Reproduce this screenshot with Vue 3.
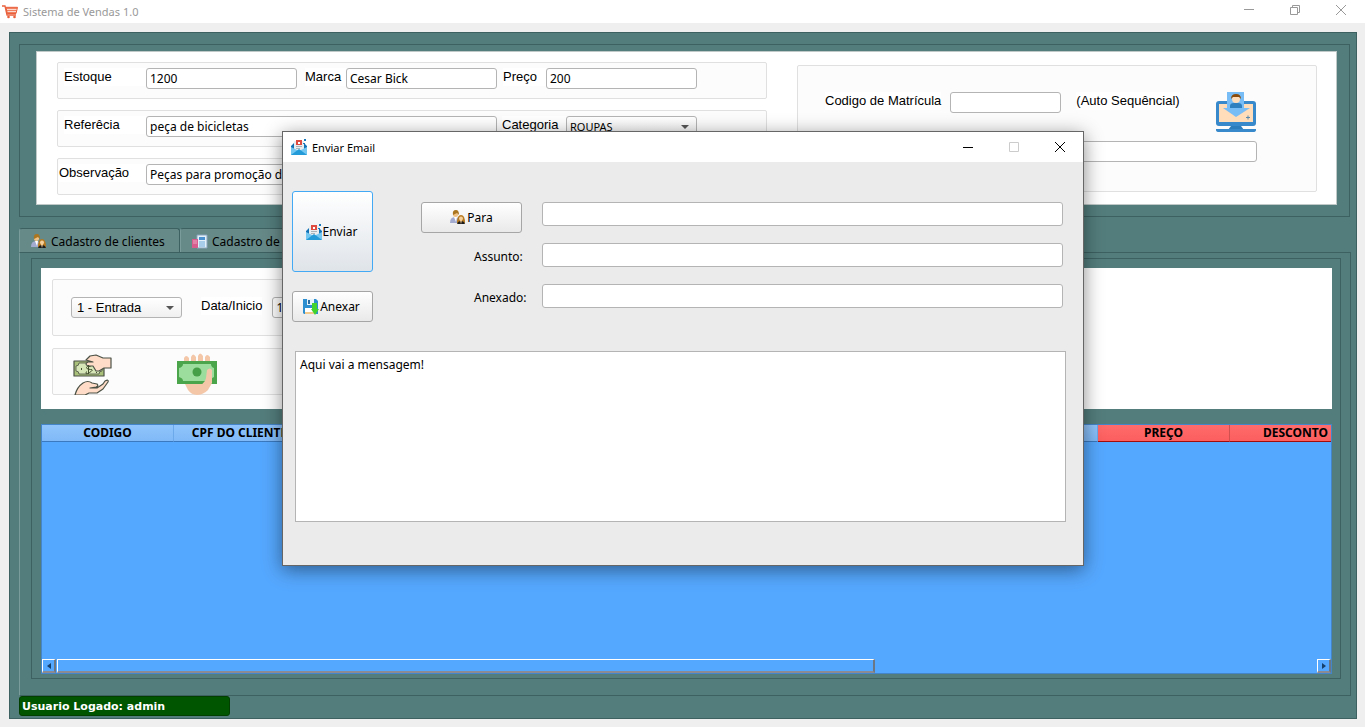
<template>
    <div class="desktop">
        <header class="titlebar">
            <svg class="cart" viewBox="0 0 16 14" aria-hidden="true">
                <path d="M0 1h3l2 9h9" fill="none" stroke="#e9603c" stroke-width="1.3" />
                <path d="M4 2.3h11.5L14 8.5H5.200z" fill="#f0805f" stroke="#e9603c" />
                <path d="M5 4.500h9.500M5.500 6.500h8.500" stroke="#fff" stroke-width=".7" />
                <circle cx="6.500" cy="12" r="1.300" fill="#e9603c" />
                <circle cx="12.500" cy="12" r="1.300" fill="#e9603c" />
            </svg>
            <h1>Sistema de Vendas 1.0</h1>
            <div class="win-buttons muted">
                <button aria-label="Minimizar"><svg viewBox="0 0 12 12"><path d="M1 5.500h10" /></svg></button>
                <button aria-label="Restaurar"><svg viewBox="0 0 12 12"><path d="M1.500 3.500h7v7h-7zM3.500 3.500v-2h7v7h-2" /></svg></button>
                <button aria-label="Fechar"><svg viewBox="0 0 12 12"><path d="M1 1l10 10M11 1L1 11" /></svg></button>
            </div>
        </header>

        <main class="workspace">
            <section class="frame top-frame">
                <div class="card product-card">
                    <div class="product-rows">
                        <div class="group">
                            <label class="first" for="estoque">Estoque</label>
                            <input id="estoque" class="short" v-model="produto.estoque">
                            <label class="second" for="marca">Marca</label>
                            <input id="marca" class="short" v-model="produto.marca">
                            <label class="third" for="preco">Preço</label>
                            <input id="preco" class="short" v-model="produto.preco">
                        </div>
                        <div class="group">
                            <label class="first" for="referencia">Referêcia</label>
                            <input id="referencia" class="long" v-model="produto.referencia">
                            <label class="category" for="categoria">Categoria</label>
                            <span class="combo small">
                                <select id="categoria" v-model="produto.categoria">
                                    <option>ROUPAS</option>
                                </select>
                            </span>
                        </div>
                        <div class="group">
                            <label class="first wide" for="observacao">Observação</label>
                            <input id="observacao" class="long" v-model="produto.observacao">
                        </div>
                    </div>

                    <div class="group enrollment">
                        <div class="enrollment-row">
                            <label for="matricula">Codigo de Matrícula</label>
                            <input id="matricula" class="code" v-model="matricula">
                            <span class="hint">(Auto Sequêncial)</span>
                            <svg class="monitor" viewBox="0 0 42 41" aria-hidden="true">
                                <rect x="1" y="9" width="40" height="25" rx="3" fill="#3789cb" />
                                <path d="M4 12h34v18H4z" fill="#ffdcba" />
                                <path d="M16 34h10l3 4H13z" fill="#2d7cbc" />
                                <path d="M1 37h40v1q0 2-3 2H4q-3 0-3-2z" fill="#3789cb" />
                                <path d="M12 0h17v16h6L21 25 8 16h4z" fill="#78bdf6" />
                                <path d="M15 16v-2q0-3 4-3h4q4 0 4 3v2z" fill="#2f80bf" />
                                <circle cx="21" cy="7" r="4" fill="#ffdcba" />
                                <path d="M16 7q0-5 5-5t5 5l-2-2h-6z" fill="#8a4b0b" />
                                <path d="M31 25.500h4M33 23.500v4" stroke="#5a88ab" />
                            </svg>
                        </div>
                        <input class="enrollment-name" aria-label="Nome" v-model="nome">
                    </div>
                </div>
            </section>

            <nav class="tabs">
                <button class="tab"><svg class="icon"><use href="#people" /></svg>Cadastro de clientes</button>
                <button class="tab">
                    <svg class="icon" viewBox="0 0 16 16" aria-hidden="true">
                        <path d="M5 1h10v13H5z" fill="#e4f0f9" stroke="#87a4bd" />
                        <path d="M7 3h6v3H7z" fill="#4b91cf" />
                        <path d="M7 8h6M7 10h6M7 12h6" stroke="#6caadd" />
                        <path d="M0 5h6v9H0z" fill="#d65c8e" />
                        <path d="M1 7h4M1 9h4" stroke="#f0a4c1" />
                    </svg>Cadastro de
                </button>
            </nav>

            <section class="tab-page">
                <div class="frame list-frame">
                    <div class="card filter-card">
                        <div class="group filters">
                            <span class="combo kind">
                                <select aria-label="Tipo" v-model="tipo">
                                    <option>1 - Entrada</option>
                                </select>
                            </span>
                            <label for="inicio">Data/Inicio</label>
                            <input id="inicio" class="date" v-model="inicio">
                        </div>
                        <div class="group actions">
                            <button class="action" aria-label="Pagamento">
                                <svg viewBox="0 0 42 42">
                                    <g stroke="#4b5145" stroke-width="1.200" stroke-linejoin="round">
                                        <path d="M2 8h30v15H2z" fill="#a9c07a" />
                                        <path d="M7 10h20q0 3 3 3v5q-3 0-3 3H7q0-3-3-3v-5q3 0 3-3z" fill="#d6e6b6" stroke-width=".8" />
                                        <path d="M14 7l4-4 6-1 7 3h8v10h-7l-5 3h-3l-3-5h-5q-4-2 0-4l5 0z" fill="#ffdcc8" />
                                        <path d="M3 42q2-8 8-12 5-3 9 0l5 1q2 2-1 3l-6 1h7l6-4 2-3q4-2 3 1l-5 7-6 4h-8l-4 2z" fill="#ffdcc8" />
                                    </g>
                                    <path d="M18.500 13.500q-4-1-4 1t4 2-1 3-3-1M16.500 12v9" fill="none" stroke="#44502f" />
                                    <path d="M9.500 15v2M24.500 19v1" stroke="#44502f" />
                                </svg>
                            </button>
                            <button class="action" aria-label="Dinheiro">
                                <svg viewBox="0 0 42 42">
                                    <path d="M8 9V5q2-4 5 0v4zM15 9V4q2-5 5 0v5zM22 9V3q2-5 5 0v6zM29 9V4q2-4 5 0v5z" fill="#f4c7a9" />
                                    <path d="M8 29h27q-1 9-9 12-9 3-14-4z" fill="#f4c7a9" />
                                    <path d="M1 8h40v23H1z" fill="#4ba64b" />
                                    <path d="M7 11h28q0 3 3 4v9q-3 1-3 4H7q0-3-4-4v-9q4-1 4-4z" fill="#9cdc9d" />
                                    <circle cx="21" cy="19" r="4.500" fill="#459f46" />
                                    <path d="M18 34q11-2 12-9l1-8q3-3 5 0v13q-3 6-7 7z" fill="#f4c7a9" />
                                </svg>
                            </button>
                        </div>
                    </div>

                    <div class="grid-box">
                        <table>
                            <thead>
                                <tr>
                                    <th v-for="(coluna, i) in colunas" :key="i" :class="{ price: i > 7 }">{{ coluna }}</th>
                                </tr>
                            </thead>
                        </table>
                        <div class="scrollbar">
                            <button aria-label="Rolar para a esquerda"><svg viewBox="0 0 6 6"><path d="M5 0v6L1 3z" /></svg></button>
                            <div class="track"><div class="thumb"></div></div>
                            <button aria-label="Rolar para a direita"><svg viewBox="0 0 6 6"><path d="M1 0v6l4-3z" /></svg></button>
                        </div>
                    </div>
                </div>
            </section>

            <footer class="status">Usuario Logado: admin</footer>
        </main>

        <div class="overlay">
            <form class="dialog" role="dialog" aria-labelledby="dialog-title" @submit.prevent>
                <header class="dialog-bar">
                    <svg class="icon"><use href="#mail" /></svg>
                    <h2 id="dialog-title">Enviar Email</h2>
                    <div class="win-buttons">
                        <button type="button" aria-label="Minimizar"><svg viewBox="0 0 12 12"><path d="M1 6.500h10" /></svg></button>
                        <button type="button" aria-label="Maximizar" disabled><svg viewBox="0 0 12 12"><path d="M1.500 1.500h9v9h-9z" /></svg></button>
                        <button type="button" aria-label="Fechar"><svg viewBox="0 0 12 12"><path d="M1 1l10 10M11 1L1 11" /></svg></button>
                    </div>
                </header>
                <div class="dialog-body">
                    <div class="dialog-top">
                        <div class="side">
                            <button class="btn send"><svg class="icon"><use href="#mail" /></svg>Enviar</button>
                            <button type="button" class="btn">
                                <svg class="icon" viewBox="0 0 16 16" aria-hidden="true">
                                    <path d="M0 0h13l2 2v13H1l-1-1z" fill="#2d8fd0" />
                                    <path d="M4 0h7v6H4z" fill="#e8f3fa" />
                                    <path d="M5 1h2v4H5z" fill="#2a6da2" />
                                    <path d="M2 9h11v6H2z" fill="#fff" />
                                    <path d="M2 13h11v2H2z" fill="#f1c98d" />
                                    <path d="M9 4h5v6h2l-4 6-4-6h1z" fill="#43d32f" />
                                </svg>Anexar
                            </button>
                        </div>
                        <div class="fields">
                            <button type="button" class="btn">
                                <svg class="icon"><use href="#people" /></svg>Para
                            </button>
                            <input aria-label="Para" v-model="email.para">
                            <label for="assunto">Assunto:</label>
                            <input id="assunto" v-model="email.assunto">
                            <label for="anexado">Anexado:</label>
                            <input id="anexado" v-model="email.anexado">
                        </div>
                    </div>
                    <textarea aria-label="Mensagem" v-model="email.mensagem"></textarea>
                </div>
            </form>
        </div>

        <svg class="sprite" aria-hidden="true">
            <symbol id="mail" viewBox="0 0 16 16">
                <path d="M0 7l3-3v7H0zM16 7l-3-3v7h3z" fill="#1272b5" />
                <path d="M3 2h10v10H3z" fill="#e9edf0" />
                <path d="M5 1h6v5H5z" fill="#df4b3e" />
                <path d="M7 3h2v2H7z" fill="#fff" />
                <path d="M5 7.500h6M5 9.500h4" stroke="#a9b3ba" />
                <path d="M0 8l8 4 8-4v8H0z" fill="#74c7f0" />
                <path d="M0 16l8-6 8 6z" fill="#239bd9" />
                <path d="M13 0h2v2h-2zM12 4h2v1h-2z" fill="#1878ba" />
            </symbol>
            <symbol id="people" viewBox="0 0 16 16">
                <path d="M0 13q0-6 5-6t5 6z" fill="#a3acd0" />
                <path d="M4 7h3l-1 5z" fill="#fff" />
                <circle cx="5.500" cy="4.500" r="2.500" fill="#f0c285" />
                <path d="M3 5q-1-5 3-5 3 0 3 5L7 3z" fill="#ab7620" />
                <path d="M7 13q0-8 4-8t4 8z" fill="#b7791f" />
                <path d="M7 14q1-3 4-3t4 3z" fill="#1c1c1c" />
                <circle cx="11" cy="8.500" r="2" fill="#f6d09a" />
                <path d="M10 10h2l-1 4z" fill="#f6d09a" />
            </symbol>
        </svg>
    </div>
</template>

<script setup>
import { ref } from 'vue'

const produto = ref({
    estoque: '1200',
    marca: 'Cesar Bick',
    preco: '200',
    referencia: 'peça de bicicletas',
    categoria: 'ROUPAS',
    observacao: 'Peças para promoção d'
})

const matricula = ref('')
const nome = ref('')
const tipo = ref('1 - Entrada')
const inicio = ref('12')

// as duas últimas colunas têm cabeçalho vermelho
const colunas = ['CODIGO', 'CPF DO CLIENTE', '', '', '', '', '', '', 'PREÇO', 'DESCONTO']

const email = ref({
    para: '',
    assunto: '',
    anexado: '',
    mensagem: 'Aqui vai a mensagem!'
})
</script>

<style>
body {
    margin: 0;
    background-color: #efefef;
}
</style>

<style scoped>
* {
    box-sizing: border-box;
}

.desktop {
    min-height: 100vh;
    display: flex;
    flex-direction: column;
    overflow: hidden;
    color: #000;
    font-family: "Noto Sans", sans-serif;
    font-size: 12px;
}

h1,
h2 {
    margin: 0;
    font-size: 11px;
    font-weight: 400;
}

button,
input,
select,
textarea {
    font: inherit;
    color: inherit;
    margin: 0;
}

.titlebar,
.dialog-bar {
    display: flex;
    align-items: center;
    background-color: #fff;
}

.titlebar {
    height: 23px;
    padding-left: 2px;
    gap: 5px;
}

.titlebar h1 {
    color: #999;
}

.cart {
    width: 16px;
    height: 14px;
}

.win-buttons {
    display: flex;
    margin-left: auto;
}

.titlebar .win-buttons {
    padding: 0 1px 3px 0;
}

.win-buttons button {
    width: 46px;
    height: 20px;
    padding: 0;
    display: grid;
    place-items: center;
    border: none;
    background: none;
}

.win-buttons svg {
    width: 12px;
    height: 12px;
    fill: none;
    stroke: #000;
}

.win-buttons.muted svg {
    stroke: #999;
}

.win-buttons button:disabled svg {
    stroke: #ccc;
}

.icon {
    width: 16px;
    height: 16px;
    flex: none;
}

.workspace {
    flex: 1;
    display: flex;
    flex-direction: column;
    margin: 9px 8px 8px 9px;
    padding: 11px 5px 2px 9px;
    border: 1px solid #3d6060;
    background-color: #537d7c;
}

.frame {
    border: 1px solid #3d6060;
}

.card {
    background-color: #fff;
}

.top-frame {
    margin-right: 1px;
    padding: 6px 12px 11px 16px;
}

.product-card {
    display: flex;
    justify-content: space-between;
    padding: 10px 19px 9px 20px;
    border: 1px solid #c0c8c8;
}

.product-rows {
    width: 710px;
    display: flex;
    flex-direction: column;
    gap: 11px;
}

.group {
    border: 1px solid #e0e0e0;
    border-radius: 2px;
    background-color: #fcfcfc;
}

.product-rows .group {
    height: 37px;
    display: flex;
    align-items: flex-start;
    padding: 5px 0;
}

.group label,
.hint {
    font-family: "Liberation Sans", sans-serif;
    font-size: 13px;
    line-height: 18px;
    white-space: nowrap;
    background-color: #fff;
}

.first {
    width: 82px;
    margin-left: 6px;
}

.first.wide {
    width: 87px;
    margin-left: 1px;
}

.second {
    width: 41px;
    margin-left: 8px;
}

.third {
    width: 43px;
    margin-left: 6px;
}

.category {
    width: 64px;
    margin-left: 5px;
}

input,
.combo,
textarea {
    border: 1px solid #b4b4b4;
    background-color: #fff;
}

input {
    height: 21px;
    padding: 0 3px;
    border-radius: 3px;
}

.short {
    width: 151px;
}

.long {
    width: 351px;
}

.combo {
    position: relative;
    width: 131px;
    height: 21px;
    border-radius: 3px;
    background: linear-gradient(#fff, #f0f0f0);
}

.combo select {
    appearance: none;
    display: block;
    width: 100%;
    height: 100%;
    padding: 0 3px;
    border: none;
    background: none;
}

.combo.small select {
    font-size: 11px;
}

.combo::after {
    content: "";
    position: absolute;
    top: 8px;
    right: 7px;
    border: 4px solid transparent;
    border-top-color: #555;
    border-bottom: none;
    pointer-events: none;
}

.enrollment {
    width: 520px;
    height: 127px;
    margin-top: 3px;
    padding: 26px 59px 0 27px;
}

.enrollment-row {
    height: 49px;
    display: flex;
    align-items: flex-start;
}

.code {
    width: 111px;
    margin: 0 15px 0 9px;
}

.monitor {
    width: 42px;
    height: 41px;
    margin-left: auto;
}

.enrollment-name {
    display: block;
    width: 100%;
}

.tabs {
    display: flex;
    margin-top: 11px;
}

.tab {
    width: 161px;
    height: 24px;
    display: flex;
    align-items: center;
    gap: 4px;
    padding: 2px 0 0 11px;
    border: 1px solid #3d6060;
    border-bottom: none;
    border-left-color: #7a9c9b;
    border-radius: 3px 3px 0 0;
    background-color: #668a88;
    white-space: nowrap;
    overflow: hidden;
}

.tab-page {
    flex: 1;
    display: flex;
    padding: 5px 9px 16px 11px;
    border: 1px solid #3d6060;
    border-left-color: #7a9c9b;
}

.list-frame {
    flex: 1;
    min-width: 0;
    display: flex;
    flex-direction: column;
    padding: 9px 8px 4px 9px;
}

.filter-card {
    display: flex;
    flex-direction: column;
    gap: 12px;
    padding: 11px 11px 14px;
}

.filter-card .group {
    max-width: 1000px;
}

.filters {
    height: 57px;
    display: flex;
    align-items: flex-start;
    padding: 17px 18px;
}

.combo.kind {
    width: 111px;
    margin-right: 19px;
    font-family: "Liberation Sans", sans-serif;
    font-size: 13px;
}

.combo.kind select {
    padding: 0 5px;
}

.date {
    width: 100px;
    margin-left: 10px;
}

.actions {
    height: 47px;
    display: flex;
    gap: 62px;
    padding: 4px 19px 0;
}

.action {
    width: 42px;
    height: 42px;
    padding: 0;
    border: none;
    background: none;
}

.action svg {
    display: block;
    width: 42px;
    height: 42px;
}

.grid-box {
    flex: 1;
    display: flex;
    flex-direction: column;
    margin-top: 15px;
    overflow: hidden;
    border: 1px solid #4484c8;
    background-color: #55a8ff;
}

table {
    width: 1320px;
    table-layout: fixed;
    border-collapse: separate;
    border-spacing: 0;
}

th {
    height: 17px;
    padding: 0;
    border-right: 1px solid #6ba9ea;
    border-bottom: 1px solid #3a79bf;
    background: linear-gradient(#91c5fc, #7fb9f7);
    font-size: 12px;
    line-height: 16px;
    font-weight: 700;
    white-space: nowrap;
}

th.price {
    border-right-color: #d05050;
    border-bottom-color: #a00c0c;
    background: linear-gradient(#ff6b6b, #fc5e5e);
}

.scrollbar {
    display: flex;
    margin-top: auto;
}

.scrollbar button,
.thumb {
    height: 14px;
    border: 1px solid #fff;
    border-right: 2px solid #6b7785;
    border-bottom: 2px solid #8b8b93;
    background-color: #55a8ff;
}

.scrollbar button {
    width: 14px;
    padding: 0;
    display: grid;
    place-items: center;
}

.scrollbar svg {
    width: 6px;
    height: 6px;
    fill: #17406b;
}

.track {
    flex: 1;
    padding: 0 1px;
}

.thumb {
    width: 65%;
}

.status {
    width: 211px;
    height: 20px;
    padding-left: 2px;
    border: 1px solid #003f00;
    border-radius: 3px;
    background-color: #005500;
    color: #fff;
    font-family: "DejaVu Sans", sans-serif;
    font-size: 11px;
    font-weight: 700;
    line-height: 19px;
}

.overlay {
    position: absolute;
    top: 131px;
    left: 0;
    right: 0;
    display: flex;
    justify-content: center;
    padding-left: 1px;
}

.dialog {
    width: 802px;
    border: 1px solid #666;
    background-color: #ebebeb;
    box-shadow: 0 4px 18px rgba(0, 0, 0, 0.45);
}

.dialog-bar {
    height: 30px;
    padding-left: 8px;
    gap: 5px;
}

.dialog-body {
    padding: 29px 17px 43px 9px;
}

.dialog-top {
    display: flex;
    gap: 48px;
    padding-right: 3px;
}

.side {
    width: 81px;
    display: flex;
    flex-direction: column;
    gap: 19px;
}

.btn {
    height: 31px;
    display: flex;
    align-items: center;
    justify-content: center;
    gap: 1px;
    padding: 0;
    border: 1px solid #a6a6a6;
    border-radius: 3px;
    background: linear-gradient(#fff, #e9e9e9);
}

.side .btn {
    padding-right: 2px;
}

.btn.send {
    height: 81px;
    border-color: #43a9f5;
    background: linear-gradient(#fff, #dfe4e9);
}

.fields {
    flex: 1;
    display: grid;
    grid-template-columns: 101px 1fr;
    grid-auto-rows: 24px;
    gap: 17px 20px;
    padding-top: 11px;
}

.fields input {
    height: 24px;
}

.fields label {
    padding-left: 53px;
    line-height: 28px;
    white-space: nowrap;
}

textarea {
    display: block;
    width: calc(100% - 3px);
    height: 171px;
    margin: 29px 0 0 3px;
    padding: 4px;
    resize: none;
    line-height: 18px;
}

.sprite {
    position: absolute;
    width: 0;
    height: 0;
}
</style>
